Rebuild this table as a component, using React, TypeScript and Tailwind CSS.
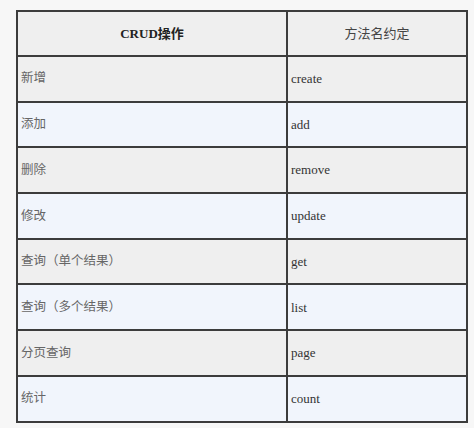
const rows: [string, string][] = [
  ["新增", "create"],
  ["添加", "add"],
  ["删除", "remove"],
  ["修改", "update"],
  ["查询（单个结果）", "get"],
  ["查询（多个结果）", "list"],
  ["分页查询", "page"],
  ["统计", "count"],
];

export default function App() {
  return (
    <div
      className="w-[474px] h-[428px] bg-[#f7f7f7] pt-[10px] pl-[16px]"
      style={{ fontFamily: '"Liberation Serif", "Noto Sans CJK SC", serif' }}
    >
      <table className="border-collapse border-2 border-[#3c3c3c] text-[13px] text-[#333] w-[452px]">
        <thead>
          <tr className="bg-[#efefef] h-[45px]">
            <th className="border-2 border-[#3c3c3c] w-[270px] font-bold text-[#222] text-center">CRUD操作</th>
            <th className="border-2 border-[#3c3c3c] font-normal text-[#444] text-center">方法名约定</th>
          </tr>
        </thead>
        <tbody>
          {rows.map(([op, name], i) => (
            <tr key={name} className={i % 2 === 0 ? "bg-[#efefef] h-[45.7px]" : "bg-[#f1f5fc] h-[45.7px]"}>
              <td className="border-2 border-[#3c3c3c] pl-[3px] text-[12.5px] text-[#666]">{op}</td>
              <td className="border-2 border-[#3c3c3c] pl-[3px]">{name}</td>
            </tr>
          ))}
        </tbody>
      </table>
    </div>
  );
}
